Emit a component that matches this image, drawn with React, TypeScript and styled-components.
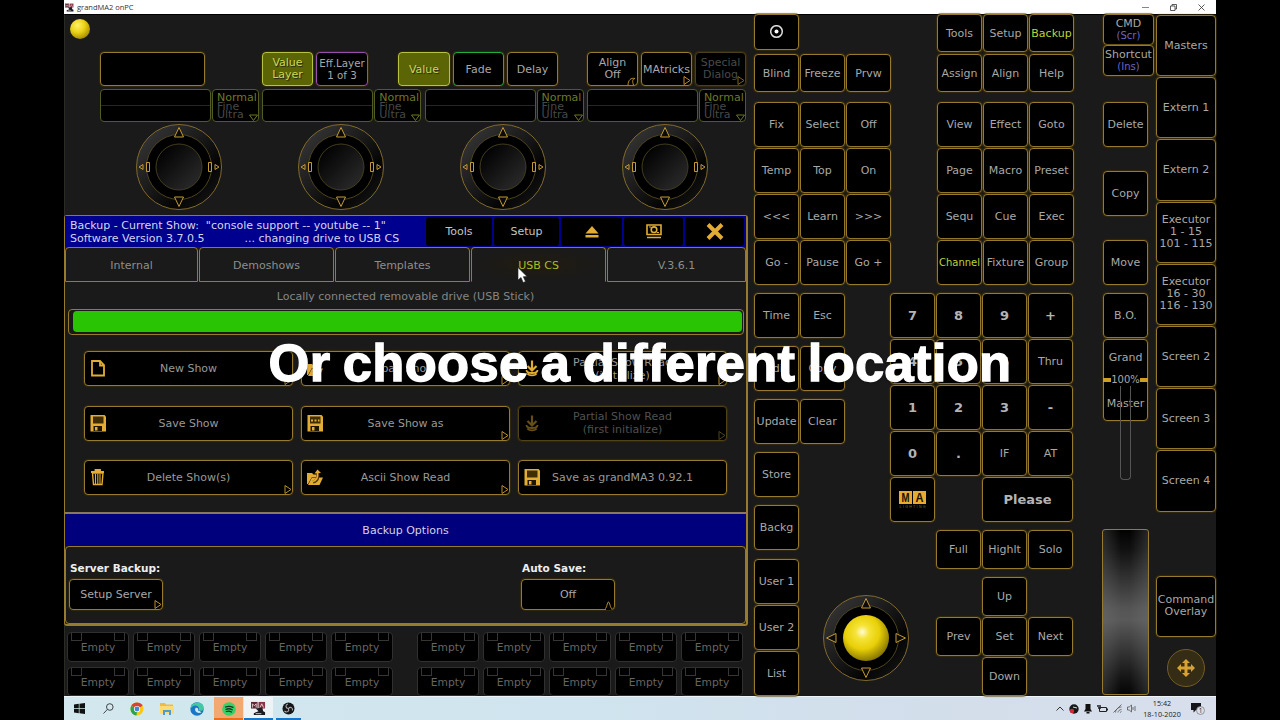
import React from 'react';
import styled, { createGlobalStyle, css } from 'styled-components';

const GlobalStyle = createGlobalStyle`
  * { box-sizing: border-box; }
  html, body { margin: 0; background: #000; overflow: hidden; }
  body { font: 11px/13px "DejaVu Sans", Verdana, sans-serif; color: #a8a8a8; }
  svg { display: block; flex: none; }
`;

const gold = '#967a2e';
const bright = '#e3ad34';

const Screen = styled.div`
  position: relative;
  width: 1280px;
  height: 720px;
  padding: 0 64px;
  background: #000;
  overflow: hidden;
`;
const Window = styled.div`
  height: 720px;
  display: grid;
  grid-template-rows: 14px 682px 24px;
`;

/* ---------- window chrome ---------- */
const TitleBar = styled.header`
  display: flex;
  align-items: center;
  gap: 3px;
  padding: 0 11px 0 1px;
  background: #fff;
  color: #333;
  font: 7.500px/14px "Open Sans", sans-serif;
  white-space: nowrap;
`;
const WindowControls = styled.div`
  margin-left: auto;
  display: flex;
  align-items: center;
  gap: 21px;
`;

/* ---------- console ---------- */
const Console = styled.main`
  display: flex;
  background: #1a1a1a;
  border-top: 1px solid #000;
  border-left: 1px solid #2b2b26;
`;

type Tone = 'gold' | 'dim' | 'olive' | 'lime' | 'green' | 'violet';
const tones: Record<Tone, ReturnType<typeof css>> = {
  gold: css`border-color: ${gold};`,
  dim: css`border-color: #4d3f1c; color: #4a4a4a;`,
  olive: css`border-color: #4a5420; color: #56591f;`,
  lime: css`border-color: #b4c43f; background: #5c6505; color: #cbd850; text-shadow: 1px 1px 1px #222;`,
  green: css`border-color: #1fb03c;`,
  violet: css`border-color: #9a4cb0;`,
};

const KeyBox = styled.div<{ $w?: number; $h?: number; $tone?: Tone; $lit?: boolean; $bold?: boolean; $small?: boolean }>`
  position: relative;
  flex: none;
  width: ${p => (p.$w ? p.$w + 'px' : 'auto')};
  height: ${p => (p.$h ? p.$h + 'px' : 'auto')};
  display: flex;
  align-items: center;
  justify-content: center;
  border: 1px solid;
  border-radius: 4px;
  background: #000;
  box-shadow: 0 0 1px 1px rgba(70, 50, 4, 0.6);
  text-align: center;
  white-space: pre;
  line-height: ${p => (p.$small ? '12px' : '13px')};
  ${p => tones[p.$tone || 'gold']}
  ${p => p.$lit && css`color: #b9d43a;`}
  ${p => p.$bold && css`font-weight: bold; font-size: 13px; color: #b4b4b4;`}
`;
const Corner = styled.svg`
  position: absolute;
  right: -1px;
  bottom: -1px;
`;

type MarkKind = 'right' | 'down' | 'up' | 'hook';
function Mark({ kind, color = '#b98f2c' }: { kind: MarkKind; color?: string }) {
  const d = {
    right: 'M3 2.500 V10.500 L9 6.500 Z',
    down: 'M1.500 5 H9.500 L5.500 10.500 Z',
    up: 'M1 10.500 C3 10.500 3 4 4.500 4 C6 4 6 10.500 8 10.500',
    hook: 'M1 11.500 C1 6 4 3.500 8 4.500 C5.500 5 5 7 6.500 11',
  }[kind];
  return (
    <Corner width="11" height="12" viewBox="0 0 11 12" fill="none" stroke={color}>
      {kind === 'up' && <path d="M2 11.500 H7.500" stroke="#000" strokeWidth="1.500" />}
      <path d={d} />
    </Corner>
  );
}

type KeyProps = {
  label?: React.ReactNode; w?: number; h?: number; tone?: Tone; lit?: boolean;
  bold?: boolean; small?: boolean; mark?: MarkKind; markColor?: string;
};
function Key({ label, w = 45, h = 45, tone, lit, bold, small, mark, markColor }: KeyProps) {
  return (
    <KeyBox $w={w} $h={h} $tone={tone} $lit={lit} $bold={bold} $small={small}>
      {label}
      {mark && <Mark kind={mark} color={markColor} />}
    </KeyBox>
  );
}

const Row = styled.div<{ $gap?: number; $before?: number; $top?: number }>`
  display: flex;
  gap: ${p => p.$gap ?? 1}px;
  padding-left: ${p => p.$before ?? 0}px;
  margin-top: ${p => p.$top ?? 0}px;
`;
const Column = styled.div<{ $gap?: number; $top?: number }>`
  display: flex;
  flex-direction: column;
  align-items: flex-start;
  gap: ${p => p.$gap ?? 1}px;
  margin-top: ${p => p.$top ?? 0}px;
`;
const Small = styled.span`
  font-size: 10.300px;
`;

/* ---------- left part: encoders, backup dialog, executors ---------- */
const LeftPart = styled.section`
  width: 685px;
  flex: none;
`;
const StatusLed = styled.div`
  width: 20px;
  height: 20px;
  margin: 4px 0 13px 5px;
  border-radius: 50%;
  background: radial-gradient(circle at 38% 32%, #fff16a, #ecd317 38%, #b49c08 68%, #554800 100%);
`;
const EncoderSlots = styled.div`
  display: grid;
  grid-template-columns: repeat(4, 162.300px);
  padding-left: 35px;
  margin-top: 3px;
`;
const ValueStrip = styled.div`
  width: 111px;
  height: 33px;
  border: 1px solid #525c22;
  border-radius: 4px;
  background: linear-gradient(#000 15px, #262626 15px, #262626 16px, #000 16px);
`;
const Resolution = styled.div`
  position: relative;
  width: 47px;
  height: 33px;
  padding: 4px 0 0 4px;
  border: 1px solid #525c22;
  border-radius: 4px;
  background: #000;
  color: #484848;
  line-height: 8.500px;
  em { font-style: normal; color: #717725; }
`;
const EncoderDials = styled.div`
  display: grid;
  grid-template-columns: repeat(4, 162px);
  padding-left: 70px;
  margin-top: 1px;
  height: 92px;
`;

function Dial({ ball, id }: { ball?: boolean; id: string }) {
  return (
    <svg width="88" height="88" viewBox="0 0 88 88" fill="none">
      <defs>
        <linearGradient id={id + 'ring'} x1="0" y1="0" x2="1" y2="1">
          <stop offset="0.100" stopColor="#343434" /><stop offset="0.450" stopColor="#1a1a1a" /><stop offset="0.700" stopColor="#050505" /><stop offset="1" stopColor="#1b1b1b" />
        </linearGradient>
        <linearGradient id={id + 'knob'} x1="0" y1="0" x2="1" y2="1">
          <stop offset="0.150" stopColor="#030303" /><stop offset="0.800" stopColor="#252525" />
        </linearGradient>
        <radialGradient id={id + 'ball'} cx="0.420" cy="0.370" r="0.680">
          <stop offset="0" stopColor="#fffbd8" /><stop offset="0.220" stopColor="#f5e337" /><stop offset="0.550" stopColor="#e8cf08" /><stop offset="1" stopColor="#796800" />
        </radialGradient>
      </defs>
      <circle cx="44" cy="44" r="42.500" fill={`url(#${id}ring)`} stroke="#80692c" />
      <circle cx="44" cy="44" r="32.500" fill="#000" stroke="#4d431f" />
      {ball
        ? <circle cx="44" cy="44" r="23" fill={`url(#${id}ball)`} />
        : <circle cx="44" cy="44" r="23" fill={`url(#${id}knob)`} stroke="#443d1e" />}
      <g stroke="#c49a32">
        <path d="M39.500 14 L44 4.500 L48.500 14 Z M39.500 74 L44 83.500 L48.500 74 Z" fill="#0a0a0a" />
        {ball
          ? <path d="M14 39.500 L4.500 44 L14 48.500 Z M74 39.500 L83.500 44 L74 48.500 Z" fill="#0a0a0a" />
          : <path d="M8 41.500 L4 44 L8 46.500 Z M11.500 39.500 H14.500 V48.500 H11.500 Z M80 41.500 L84 44 L80 46.500 Z M73.500 39.500 H76.500 V48.500 H73.500 Z" />}
      </g>
    </svg>
  );
}

const Dialog = styled.section`
  width: 684px;
  height: 411px;
  margin-left: -1px;
  border: 2px solid ${gold};
  border-top-width: 1px;
  border-left-width: 1px;
  border-bottom-width: 2px;
  border-radius: 3px;
  background: #1a1a1a;
`;
const DialogHeader = styled.header`
  display: flex;
  height: 31px;
  gap: 2px;
  padding: 1px 0 1px 0;
  background: #00008e;
`;
const DialogTitle = styled.div`
  width: 359px;
  padding: 2px 0 0 5px;
  color: #d5d5ee;
  white-space: pre;
`;
const SecondPhrase = styled.span`
  margin-left: 40px;
`;
const HeaderButton = styled.div<{ $w: number }>`
  width: ${p => p.$w}px;
  display: flex;
  align-items: center;
  justify-content: center;
  border-radius: 3px;
  background: #000;
  color: #c4c4c4;
`;
const Tabs = styled.nav`
  display: grid;
  grid-template-columns: 133px 135px 135px 135px 139px;
  gap: 1px;
  height: 35px;
`;
const Tab = styled.div<{ $active?: boolean }>`
  display: flex;
  align-items: center;
  justify-content: center;
  padding-top: 1px;
  border: 1px solid ${gold};
  border-radius: 4px 4px 0 0;
  color: #8d8d8d;
  ${p => p.$active && css`
    border-bottom-color: transparent;
    color: #aabd24;
    background: radial-gradient(ellipse, #211b10, #1a1a1a 70%);
  `}
`;
const DialogBody = styled.div`
  height: 232px;
  border-bottom: 2px solid #8a7762;
`;
const DriveLabel = styled.div`
  height: 27px;
  padding-top: 8px;
  text-align: center;
  color: #858585;
`;
const Capacity = styled.div`
  width: 676px;
  height: 26px;
  margin-left: 3px;
  padding: 1px 1px 2px 4px;
  border: 1px solid ${gold};
  border-radius: 4px;
`;
const CapacityFill = styled.div`
  height: 100%;
  border-radius: 4px;
  background: #29c404;
`;
const ActionGrid = styled.div`
  display: grid;
  grid-template-columns: repeat(3, 209px);
  grid-auto-rows: 35px;
  gap: 19.500px 8px;
  padding: 16px 0 0 19px;
`;
const Action = styled(KeyBox)<{ $off?: boolean }>`
  color: ${p => (p.$off ? '#505050' : '#999')};
  border-color: ${p => (p.$off ? '#4f431a' : gold)};
  svg:first-child { opacity: ${p => (p.$off ? 0.450 : 1)}; }
`;
const ActionIcon = styled.svg`
  position: absolute;
  left: 4px;
  top: 8px;
`;
const OptionsTitle = styled.div`
  height: 32px;
  line-height: 33px;
  text-align: center;
  background: #00007c;
  color: #d2d2e8;
`;
const Options = styled.div`
  height: 78px;
  display: flex;
  padding: 15px 0 0 3px;
  border: 1px solid ${gold};
  border-radius: 4px;
`;
const Option = styled.div`
  width: 452px;
  flex: none;
`;
const OptionLabel = styled.div`
  height: 17px;
  padding-left: 1px;
  color: #eee;
  font-weight: bold;
  font-size: 10.500px;
`;

type IconName = 'file' | 'folder' | 'floppy' | 'floppyAs' | 'import' | 'trash' | 'open';
function Icon({ name }: { name: IconName }) {
  return (
    <ActionIcon width="18" height="17" viewBox="0 0 18 17" fill="none" stroke={bright} strokeWidth="1.800">
      {name === 'file' && <path d="M3 1 H11 L15 5 V15.500 H3 Z M11 1 V5.500 H15" />}
      {(name === 'folder' || name === 'open') && <>
        <path d="M1 4 H6 L7.500 5.500 H12.500 V8 H6 L2 15 H1 Z" fill={bright} stroke="none" />
        <path d="M6 8.500 H17 L13.500 16 H2 Z" fill={bright} stroke="none" />
        <path d="M7 13 C12 12 12.500 8 11.500 4" stroke="#5c3900" strokeWidth="3" />
        <path d="M7 12.500 C11 11 12 7 11.500 4" strokeWidth="1.500" />
        <path d="M8.500 4.500 L11.500 0.500 L15 4 Z" fill={bright} stroke="none" />
      </>}
      {(name === 'floppy' || name === 'floppyAs') && <>
        <path d="M1.500 0 H15.500 L17 1.500 V16.500 H1.500 Z" fill={bright} stroke="none" />
        <path d="M4 1.500 H14.500 V8.500 H4 Z" fill="#3e2d05" stroke="none" />
        <path d="M4.500 11 H13 V16 H4.500 Z" fill="#201700" stroke="none" />
        <path d="M6 12 H8.500 V15.500 H6 Z" fill={bright} stroke="none" />
        {name === 'floppyAs' && <path d="M5 5.500 H13.500" strokeWidth="2" strokeDasharray="2 1.500" />}
      </>}
      {name === 'import' && <>
        <path d="M9 0.500 V10 M4.500 6 L9 10.500 L13.500 6" strokeWidth="2.200" />
        <path d="M3.500 10 C3.500 12 6 13 9 13 C12 13 14.500 12 14.500 10 M4.500 13.500 C5.500 16 12.500 16 13.500 13.500" strokeWidth="1.800" />
      </>}
      {name === 'trash' && <>
        <path d="M2 3 H15 M6.500 2.500 V1 H11 V2.500" />
        <path d="M3.500 4 L4.500 15.500 H13 L14 4 Z" strokeWidth="1.400" />
        <path d="M6.500 5 V15 M8.800 5 V15 M11 5 V15" strokeWidth="1.100" />
      </>}
    </ActionIcon>
  );
}

const actions: { icon: IconName; label: string; mark?: boolean; off?: boolean }[] = [
  { icon: 'file', label: 'New Show', mark: true },
  { icon: 'folder', label: 'Load Show', mark: true },
  { icon: 'import', label: 'Partial Show Read\n(initialize)', mark: true },
  { icon: 'floppy', label: 'Save Show' },
  { icon: 'floppyAs', label: 'Save Show as', mark: true },
  { icon: 'import', label: 'Partial Show Read\n(first initialize)', mark: true, off: true },
  { icon: 'trash', label: 'Delete Show(s)', mark: true },
  { icon: 'open', label: 'Ascii Show Read', mark: true },
  { icon: 'floppy', label: 'Save as grandMA3 0.92.1' },
];

const ExecutorArea = styled.div`
  display: grid;
  grid-template-columns: repeat(5, 62px) 16px repeat(5, 62px);
  grid-template-rows: 30px 29px;
  gap: 5px 4px;
  padding: 6px 0 0 2px;
`;
const Executor = styled.div`
  position: relative;
  padding: 8px 0 0;
  text-align: center;
  border: 1px solid #303030;
  border-radius: 4px;
  background: #000;
  color: #656565;
  font-size: 10.700px;
  &::before, &::after {
    content: '';
    position: absolute;
    top: 0;
    width: 9px;
    height: 7px;
    border: 1px solid #363636;
    border-top: 0;
  }
  &::before { left: 3px; }
  &::after { right: 3px; }
`;

/* ---------- middle part: command keys ---------- */
const MiddlePart = styled.section`
  width: 320px;
  margin-left: 4px;
  margin-top: -1px;
  flex: none;
`;
const Bank = styled.div<{ $cols: number }>`
  display: grid;
  grid-template-columns: repeat(${p => p.$cols}, 45px);
  gap: 1px;
`;
const Spread = styled.div`
  display: flex;
  justify-content: space-between;
  align-items: flex-start;
`;
const Numpad = styled(Bank)`
  width: 183px;
`;
const WideCell = styled.div`
  grid-column: 3 / 5;
`;
const TrackballRow = styled.div`
  display: flex;
  justify-content: flex-end;
  gap: 26px;
  margin-top: 8px;
  width: 183px;
`;
const TrackballHolder = styled.div`
  padding-top: 64px;
`;
const NavGrid = styled.div`
  display: grid;
  grid-template-columns: repeat(3, 45px);
  grid-template-rows: repeat(3, 39px);
  gap: 1px;
`;
const NavCell = styled.div<{ $col: number; $row: number }>`
  grid-column: ${p => p.$col};
  grid-row: ${p => p.$row};
`;
const NavWrap = styled.div`
  display: flex;
  flex-direction: column;
  gap: 8px;
`;
const Tight = styled.span`
  font-size: 10px;
`;

/* ---------- right part ---------- */
const RightPart = styled.section`
  display: flex;
  gap: 2px;
  margin-left: 29px;
  margin-top: -1px;
`;
const Hint = styled.span`
  color: #6d66c8;
  font-size: 10px;
`;
const MasterFader = styled(KeyBox)`
  flex-direction: column;
  justify-content: flex-start;
  padding-top: 11px;
`;
const FaderValue = styled.div`
  display: flex;
  align-items: center;
  margin: 9px 0 11px;
  font-size: 10px;
  &::before, &::after { content: ''; width: 8px; height: 4px; background: #cf9e25; }
`;
const FaderSlot = styled.div`
  position: relative;
  width: 11px;
  height: 94px;
  margin: -35px 0 0 17px;
  border: 1px solid #555;
  border-top: 0;
  border-radius: 0 0 4px 4px;
`;
const Wheel = styled.div`
  width: 47px;
  height: 166px;
  margin: 49px 0 0 -1px;
  border: 1px solid ${gold};
  border-radius: 3px;
  background:
    linear-gradient(90deg, rgba(120,120,120,.3), transparent 40%, transparent 60%, rgba(120,120,120,.3)),
    linear-gradient(#020202, #111 12%, #555 48%, #595959 55%, #151515 90%, #050505);
`;
const MoveHandle = styled.div`
  width: 38px;
  height: 38px;
  margin: 12px 0 0 11px;
  display: flex;
  align-items: center;
  justify-content: center;
  border: 1px solid #735d25;
  border-radius: 50%;
  background: #352c16;
`;

/* ---------- desktop taskbar ---------- */
const Taskbar = styled.footer`
  display: flex;
  align-items: stretch;
  border-top: 1px solid #eef5f8;
  background: linear-gradient(90deg, #d2e8ee, #cfe4ee 45%, #d3deeb 75%, #d8deec);
`;
const TaskItem = styled.div<{ $bg?: string; $line?: string; $w?: number }>`
  width: ${p => p.$w ?? 30}px;
  display: flex;
  align-items: center;
  justify-content: center;
  background: ${p => p.$bg || 'transparent'};
  box-shadow: inset 0 -2px ${p => p.$line || 'transparent'};
`;
const Tray = styled.div`
  margin-left: auto;
  padding-right: 10px;
  display: flex;
  align-items: center;
  gap: 5px;
  color: #222;
`;
const Clock = styled.div`
  width: 42px;
  text-align: center;
  white-space: nowrap;
  font: 7.200px/11px "Open Sans", sans-serif;
`;

/* ---------- overlays ---------- */
const Caption = styled.div`
  position: absolute;
  left: 0;
  right: 0;
  top: 333px;
  text-align: center;
  white-space: nowrap;
  color: #fff;
  font: bold 52.500px/60px "Liberation Sans", Arial, sans-serif;
  letter-spacing: 0.300px;
  word-spacing: -2.500px;
  -webkit-text-stroke: 1.300px #fff;
  text-shadow: 0 1px 3px rgba(0, 0, 0, 0.5);
`;
const Pointer = styled.svg`
  position: absolute;
  left: 517px;
  top: 267px;
`;

const AppLogo = ({ size }: { size: number }) => (
  <svg width={size} height={size} viewBox="0 0 16 16">
    <path d="M0 1 H7 V8 H0 Z" fill="#5a2935" /><path d="M8 1 H15 V8 H8 Z" fill="#8c3442" />
    <path d="M1.500 7 V3 L3.500 5 L5.500 3 V7 M9.500 7 L11.500 3 L13.500 7" stroke="#e5c9cc" fill="none" />
    <path d="M5 8 L12 7 L13 11 L15 12 V15 H3 V13 L8 11 Z" fill="#1c1c22" />
    <path d="M5 13.500 H11" stroke="#ccc" />
  </svg>
);

const MaLogo = () => (
  <svg width="30" height="20" viewBox="0 0 30 20">
    <path d="M1 1 H14 V14 H1 Z M15 1 H28 V14 H15 Z" fill="#e8ab2d" />
    <text x="7.500" y="12" textAnchor="middle" fontFamily="Liberation Sans" fontWeight="bold" fontSize="12" fill="#191200" textLength="8" lengthAdjust="spacingAndGlyphs">M</text>
    <text x="21.500" y="12" textAnchor="middle" fontFamily="Liberation Sans" fontWeight="bold" fontSize="12" fill="#191200" textLength="8" lengthAdjust="spacingAndGlyphs">A</text>
    <text x="14.500" y="18" textAnchor="middle" fontFamily="Liberation Sans" fontSize="3.500" textLength="26" fill="#8b6d28">LIGHTING</text>
  </svg>
);

const keys = (labels: string[], h = 45) =>
  labels.map(l => (
    <Key key={l} label={l === 'Channel' ? <Tight>{l}</Tight> : l} h={h} lit={l === 'Backup' || l === 'Channel'} />
  ));

function Encoders() {
  return (
    <>
      <StatusLed />
      <Row $gap={0} $before={35}>
        <Key w={105} h={34} />
        <Row $gap={3} $before={57}>
          <Key w={51} h={34} tone="lime" label={'Value\nLayer'} small />
          <Key w={52} h={34} tone="violet" label={<Small>{'Eff.Layer\n1 of 3'}</Small>} small />
        </Row>
        <Row $gap={3} $before={30}>
          <Key w={52} h={34} tone="lime" label="Value" />
          <Key w={51} h={34} tone="green" label="Fade" />
          <Key w={51} h={34} label="Delay" />
        </Row>
        <Row $gap={3} $before={29}>
          <Key w={51} h={34} label={'Align\nOff'} small mark="hook" />
          <Key w={51} h={34} label="MAtricks" mark="right" />
          <Key w={51} h={34} tone="dim" label={'Special\nDialog'} small mark="right" markColor="#80641f" />
        </Row>
      </Row>
      <EncoderSlots>
        {[0, 1, 2, 3].map(i => (
          <Row key={i}>
            <ValueStrip />
            <Resolution>
              <em>Normal</em><br />Fine<br />Ultra
              <Mark kind="down" color="#717725" />
            </Resolution>
          </Row>
        ))}
      </EncoderSlots>
      <EncoderDials>
        {[0, 1, 2, 3].map(i => <Dial key={i} id={'enc' + i} />)}
      </EncoderDials>
    </>
  );
}

function BackupDialog() {
  return (
    <Dialog>
      <DialogHeader>
        <DialogTitle>
          {'Backup - Current Show:  "console support -- youtube -- 1"\nSoftware Version 3.7.0.5'}
          <SecondPhrase>... changing drive to USB CS</SecondPhrase>
        </DialogTitle>
        <HeaderButton $w={66}>Tools</HeaderButton>
        <HeaderButton $w={65}>Setup</HeaderButton>
        <HeaderButton $w={61}>
          <svg width="14" height="12" viewBox="0 0 14 12" fill={bright}><path d="M7 0 L13.500 7.500 H0.500 Z M0.500 9 H13.500 V11.500 H0.500 Z" /></svg>
        </HeaderButton>
        <HeaderButton $w={59}>
          <svg width="16" height="15" viewBox="0 0 16 15" fill="none" stroke={bright} strokeWidth="1.600">
            <path d="M1 1 H15 V10.500 H1 Z M1 13.500 H15" /><circle cx="8" cy="5.700" r="2.800" />
            <path d="M3 3 H5 M11 8.500 H13" strokeWidth="1" />
          </svg>
        </HeaderButton>
        <HeaderButton $w={59}>
          <svg width="18" height="17" viewBox="0 0 18 17" stroke={bright} strokeWidth="4"><path d="M2 1.500 L16 15.500 M16 1.500 L2 15.500" /></svg>
        </HeaderButton>
      </DialogHeader>
      <Tabs>
        {['Internal', 'Demoshows', 'Templates', 'USB CS', 'V.3.6.1'].map(t => <Tab key={t} $active={t === 'USB CS'}>{t}</Tab>)}
      </Tabs>
      <DialogBody>
        <DriveLabel>Locally connected removable drive (USB Stick)</DriveLabel>
        <Capacity><CapacityFill /></Capacity>
        <ActionGrid>
          {actions.map((a, i) => (
            <Action key={i} $off={a.off}>
              <Icon name={a.icon} />
              {a.label}
              {a.mark && <Mark kind="right" color={a.off ? '#4f431a' : undefined} />}
            </Action>
          ))}
        </ActionGrid>
      </DialogBody>
      <OptionsTitle>Backup Options</OptionsTitle>
      <Options>
        <Option>
          <OptionLabel>Server Backup:</OptionLabel>
          <Key w={94} h={31} label="Setup Server" mark="right" />
        </Option>
        <Option>
          <OptionLabel>Auto Save:</OptionLabel>
          <Key w={94} h={31} label="Off" mark="up" />
        </Option>
      </Options>
    </Dialog>
  );
}

function CommandKeys() {
  return (
    <MiddlePart>
      <Spread>
        <Column $gap={4}>
          <Key h={36} label={
            <svg width="14" height="14" viewBox="0 0 14 14" fill="none" stroke="#ddd" strokeWidth="1.500">
              <circle cx="6.500" cy="6.500" r="5.800" /><circle cx="6.500" cy="6.500" r="2" fill="#fff" stroke="none" />
            </svg>
          } />
          <Bank $cols={3}>{keys(['Blind', 'Freeze', 'Prvw'], 38)}</Bank>
        </Column>
        <Column $gap={2}>
          <Bank $cols={3}>{keys(['Tools', 'Setup', 'Backup'], 38)}</Bank>
          <Bank $cols={3}>{keys(['Assign', 'Align', 'Help'], 38)}</Bank>
        </Column>
      </Spread>
      <Row $top={10} $gap={46}>
        <Bank $cols={3}>{keys(['Fix', 'Select', 'Off', 'Temp', 'Top', 'On', '<<<', 'Learn', '>>>', 'Go -', 'Pause', 'Go +'])}</Bank>
        <Bank $cols={3}>{keys(['View', 'Effect', 'Goto', 'Page', 'Macro', 'Preset', 'Sequ', 'Cue', 'Exec', 'Channel', 'Fixture', 'Group'])}</Bank>
      </Row>
      <Row $top={8} $gap={45}>
        <Column $gap={8}>
          <Bank $cols={2}>{keys(['Time', 'Esc'])}</Bank>
          <Bank $cols={2}>{keys(['Edit', 'Copy'])}</Bank>
          <Bank $cols={2}>{keys(['Update', 'Clear'])}</Bank>
          {keys(['Store', 'Backg'])}
          <Column $top={1}>{keys(['User 1', 'User 2', 'List'])}</Column>
        </Column>
        <div>
          <Numpad $cols={4}>
            {['7', '8', '9', '+', '4', '5', '6', 'Thru', '1', '2', '3', '-', '0', '.', 'IF', 'AT'].map(k =>
              <Key key={k} label={k} bold={k.length === 1} />)}
            <Key label={<MaLogo />} />
            <WideCell><Key w={91} label="Please" bold /></WideCell>
          </Numpad>
          <TrackballRow>
            <TrackballHolder><Dial ball id="track" /></TrackballHolder>
            <NavWrap>
              <Bank $cols={3}>{keys(['Full', 'Highlt', 'Solo'], 39)}</Bank>
              <NavGrid>
                <NavCell $col={2} $row={1}><Key h={39} label="Up" /></NavCell>
                <NavCell $col={1} $row={2}><Key h={39} label="Prev" /></NavCell>
                <NavCell $col={2} $row={2}><Key h={39} label="Set" /></NavCell>
                <NavCell $col={3} $row={2}><Key h={39} label="Next" /></NavCell>
                <NavCell $col={2} $row={3}><Key h={39} label="Down" /></NavCell>
              </NavGrid>
            </NavWrap>
          </TrackballRow>
        </div>
      </Row>
    </MiddlePart>
  );
}

const screens = ['Masters', 'Extern 1', 'Extern 2', 'Executor\n1 - 15\n101 - 115', 'Executor\n16 - 30\n116 - 130', 'Screen 2', 'Screen 3', 'Screen 4'];

function SideKeys() {
  return (
    <RightPart>
      <div>
        <Column $gap={0}>
          <Key w={51} h={31} small label={<span>CMD<br /><Hint>(Scr)</Hint></span>} />
          <Key w={51} h={31} small label={<span>Shortcut<br /><Hint>(Ins)</Hint></span>} />
        </Column>
        <Column $gap={24} $top={26}>{keys(['Delete', 'Copy', 'Move'])}</Column>
        <Column $top={8}>
          <Key label="B.O." />
          <MasterFader $w={45} $h={82}>
            Grand
            <FaderValue>100%</FaderValue>
            Master
          </MasterFader>
        </Column>
        <FaderSlot />
        <Wheel />
      </div>
      <Column $top={1} $gap={0}>
        <Column>{screens.map(s => <Key key={s} w={60} h={61.200} label={s} small />)}</Column>
        <Column $top={64}><Key w={60} h={61} label={'Command\nOverlay'} small /></Column>
        <MoveHandle>
          <svg width="18" height="18" viewBox="0 0 18 18" fill="#d6a233">
            <path d="M7.500 4 H5 L9 0 L13 4 H10.500 V7.500 H14 V5 L18 9 L14 13 V10.500 H10.500 V14 H13 L9 18 L5 14 H7.500 V10.500 H4 V13 L0 9 L4 5 V7.500 H7.500 Z" />
          </svg>
        </MoveHandle>
      </Column>
    </RightPart>
  );
}

function DesktopBar() {
  return (
    <Taskbar>
      <TaskItem><svg width="11" height="11" viewBox="0 0 11 11" fill="#111"><path d="M0 1.500 L4.800 0.800 V5.200 H0 Z M5.500 0.700 L11 0 V5.200 H5.500 Z M0 5.900 H4.800 V10.200 L0 9.500 Z M5.500 5.900 H11 V11 L5.500 10.300 Z" /></svg></TaskItem>
      <TaskItem $w={28}><svg width="11" height="11" viewBox="0 0 11 11" fill="none" stroke="#333" strokeWidth="0.900"><circle cx="6.800" cy="4" r="3.300" /><path d="M4.300 6.500 L0.500 10.500" /></svg></TaskItem>
      <TaskItem>
        <svg width="14" height="14" viewBox="0 0 14 14">
          <circle cx="7" cy="7" r="6.500" fill="#fbc816" /><path d="M7 7 L1.400 3.700 A6.500 6.500 0 0 1 12.600 3.700 Z" fill="#dc3f34" />
          <path d="M7 7 L1.400 3.700 A6.500 6.500 0 0 0 6.500 13.500 Z" fill="#2ca350" /><circle cx="7" cy="7" r="3.100" fill="#fff" /><circle cx="7" cy="7" r="2.400" fill="#4285e0" />
        </svg>
      </TaskItem>
      <TaskItem><svg width="14" height="12" viewBox="0 0 14 12"><path d="M0 0 H5 L6 1.500 H13 V11 H0 Z" fill="#e9bd40" /><path d="M0 3 H14 V11 H0 Z" fill="#ffdc73" /><path d="M3 12 V7 H11 V12 H9 V9 H5 V12 Z" fill="#4c9bd3" /></svg></TaskItem>
      <TaskItem>
        <svg width="14" height="14" viewBox="0 0 14 14">
          <circle cx="7" cy="7" r="6.700" fill="#1976c4" /><path d="M1 4 C4 -1.500 14 -0.500 13.700 6 C13.500 9 9.500 9.500 8.500 8 C10 6 8 3.500 5.500 3.500 C3.500 3.500 2 4 0.500 7 Z" fill="#45c7a0" />
          <path d="M5.500 6 C4 9 7 12 11.500 10.500 C10 8.500 8.500 9.500 8 8 C9 7 7 5 5.500 6 Z" fill="#d2e8ee" />
        </svg>
      </TaskItem>
      <TaskItem $w={2} />
      <TaskItem $bg="#f1a873" $line="#e8701a" $w={29}>
        <svg width="14" height="14" viewBox="0 0 14 14" fill="none" stroke="#17351f" strokeWidth="1.300" strokeLinecap="round"><circle cx="7" cy="7" r="6.800" fill="#37d267" stroke="none" /><path d="M3.500 5 C6 4 9 4.300 11 5.300 M4 7.300 C6 6.500 8.500 6.800 10.200 7.800 M4.300 9.500 C6 9 8 9.200 9.500 10" /></svg>
      </TaskItem>
      <TaskItem $w={1} />
      <TaskItem $bg="#eef3f6" $line="#1676c8" $w={29}><AppLogo size={15} /></TaskItem>
      <TaskItem $w={3} />
      <TaskItem $line="#1676c8" $w={25}>
        <svg width="13" height="13" viewBox="0 0 13 13" fill="none" stroke="#aaa" strokeWidth="1.100"><circle cx="6.500" cy="6.500" r="6" fill="#15151a" stroke="none" /><path d="M6.500 6.500 C3 6 3.500 2.500 6 2 M6.500 6.500 C8.500 4 11 6 10.500 8.500 M6.500 6.500 C7.500 9.500 4.500 11 2.500 9" /></svg>
      </TaskItem>
      <Tray>
        <svg width="8" height="5" viewBox="0 0 8 5" fill="none" stroke="#333"><path d="M0.500 4.500 L4 1 L7.500 4.500" /></svg>
        <svg width="10" height="10" viewBox="0 0 10 10"><circle cx="5" cy="5" r="4.700" fill="#16161b" /><circle cx="3" cy="7" r="2.200" fill="#d22a35" /><path d="M4 3 L8 4" stroke="#ddd" /></svg>
        <svg width="8" height="10" viewBox="0 0 8 10" fill="#111"><path d="M1.500 0 H6.500 V5 L8 7.500 H0 L1.500 5 Z M2.500 8 H5.500 V9.500 H2.500 Z" /></svg>
        <svg width="11" height="8" viewBox="0 0 11 8" fill="none" stroke="#222"><path d="M2.500 2.500 H9.500 V6.500 H2.500 Z M10.500 3.500 V5.500" /><path d="M0 1 H4 M1 3 H4" strokeWidth="1.500" /></svg>
        <svg width="9" height="9" viewBox="0 0 9 9" fill="none" stroke="#555" strokeWidth="0.800"><path d="M0.500 8.500 L8.500 0.500 M2.500 8.500 C2.500 6 5 3 8.500 3 M5 8.500 C5 7 6.500 5.500 8.500 5.500 M7 8.500 L8.500 7.500" /></svg>
        <svg width="9" height="9" viewBox="0 0 9 9" fill="none" stroke="#555" strokeWidth="0.800"><path d="M0.500 3 H2.200 L4.500 1 V8 L2.200 6 H0.500 Z M6 3 V6 M8 2 V7" /></svg>
        <Clock>15:42<br />18-10-2020</Clock>
        <svg width="18" height="15" viewBox="0 0 18 15"><path d="M3 2 H13 V9 H8 L5.500 11.500 V9 H3 Z" fill="#15151a" /><circle cx="12.500" cy="9.500" r="4" fill="#d8deea" stroke="#777" strokeWidth="0.700" /><text x="12.500" y="12" textAnchor="middle" fontFamily="Open Sans" fontSize="6.500" fill="#222">1</text></svg>
      </Tray>
    </Taskbar>
  );
}

export default function App() {
  return (
    <Screen>
      <GlobalStyle />
      <Window>
        <TitleBar>
          <AppLogo size={9} />
          <span>grandMA2 onPC</span>
          <WindowControls>
            <svg width="7" height="7" viewBox="0 0 7 7" stroke="#666" strokeWidth="0.800"><path d="M0 3.500 H7" /></svg>
            <svg width="7" height="7" viewBox="0 0 7 7" fill="none" stroke="#333" strokeWidth="0.800"><path d="M0.500 2 H5 V6.500 H0.500 Z M2 2 V0.500 H6.500 V5 H5" /></svg>
            <svg width="7" height="7" viewBox="0 0 7 7" stroke="#333" strokeWidth="0.800"><path d="M0.500 0.500 L6.500 6.500 M6.500 0.500 L0.500 6.500" /></svg>
          </WindowControls>
        </TitleBar>
        <Console>
          <LeftPart>
            <Encoders />
            <BackupDialog />
            <ExecutorArea>
              {Array.from({ length: 22 }, (_, i) => (i % 11 === 5 ? <span key={i} /> : <Executor key={i}>Empty</Executor>))}
            </ExecutorArea>
          </LeftPart>
          <CommandKeys />
          <SideKeys />
        </Console>
        <DesktopBar />
      </Window>
      <Caption>Or choose a different location</Caption>
      <Pointer width="11" height="17" viewBox="0 0 11 17"><path d="M1 0.500 V13 L4 10.500 L6.200 15.500 L8.500 14.500 L6.300 9.700 L10 9.500 Z" fill="#fff" stroke="#222" strokeWidth="0.600" /></Pointer>
    </Screen>
  );
}
